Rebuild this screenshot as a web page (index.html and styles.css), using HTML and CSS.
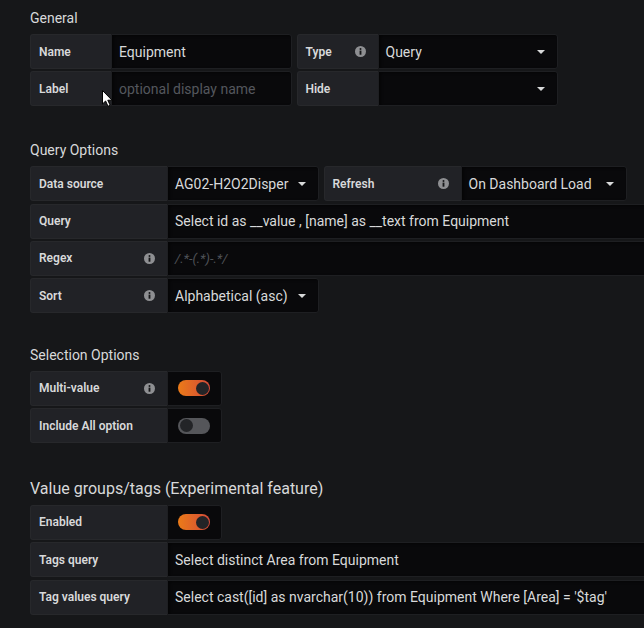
FILE: index.html
```html
<!DOCTYPE html>
<html lang="en">
<head>
<meta charset="utf-8">
<title>Variable editor</title>
<link rel="stylesheet" href="styles.css">
</head>
<body>
<div class="page">
  <section class="section s-general">
    <h5 class="section-heading">General</h5>
    <div class="form-inline">
      <div class="gf-form">
        <span class="gf-label w-name">Name</span>
        <div class="gf-input w-name-input"><span class="val">Equipment</span></div>
      </div>
      <div class="gf-form">
        <span class="gf-label w-name">Type<span class="info"><svg viewBox="0 0 12 12" width="11" height="11"><circle cx="6" cy="6" r="6" fill="#8e8f92"/><rect x="5" y="5" width="2" height="4.5" fill="#161719"/><circle cx="6" cy="3.3" r="1.1" fill="#161719"/></svg></span></span>
        <div class="gf-input gf-select w-type-input"><span class="val">Query</span><span class="caret"></span></div>
      </div>
    </div>
    <div class="form-inline">
      <div class="gf-form">
        <span class="gf-label w-name">Label</span>
        <div class="gf-input w-name-input"><span class="placeholder">optional display name</span></div>
      </div>
      <div class="gf-form">
        <span class="gf-label w-name">Hide</span>
        <div class="gf-input gf-select w-type-input"><span class="val"></span><span class="caret"></span></div>
      </div>
    </div>
  </section>

  <section class="section s-query">
    <h5 class="section-heading">Query Options</h5>
    <div class="form-inline">
      <div class="gf-form">
        <span class="gf-label w-wide">Data source</span>
        <div class="gf-input gf-select w-ds"><span class="val">AG02-H2O2Disper</span><span class="caret"></span></div>
      </div>
      <div class="gf-form">
        <span class="gf-label w-wide">Refresh<span class="info"><svg viewBox="0 0 12 12" width="11" height="11"><circle cx="6" cy="6" r="6" fill="#8e8f92"/><rect x="5" y="5" width="2" height="4.5" fill="#161719"/><circle cx="6" cy="3.3" r="1.1" fill="#161719"/></svg></span></span>
        <div class="gf-input gf-select w-refresh"><span class="val">On Dashboard Load</span><span class="caret"></span></div>
      </div>
    </div>
    <div class="form-inline">
      <div class="gf-form">
        <span class="gf-label w-wide">Query</span>
        <div class="gf-input w-full"><span class="val">Select id as __value , [name] as __text from Equipment</span></div>
      </div>
    </div>
    <div class="form-inline">
      <div class="gf-form">
        <span class="gf-label w-wide">Regex<span class="info"><svg viewBox="0 0 12 12" width="11" height="11"><circle cx="6" cy="6" r="6" fill="#8e8f92"/><rect x="5" y="5" width="2" height="4.5" fill="#161719"/><circle cx="6" cy="3.3" r="1.1" fill="#161719"/></svg></span></span>
        <div class="gf-input w-full"><span class="placeholder regex">/.*-(.*)-.*/</span></div>
      </div>
    </div>
    <div class="form-inline">
      <div class="gf-form">
        <span class="gf-label w-wide">Sort<span class="info"><svg viewBox="0 0 12 12" width="11" height="11"><circle cx="6" cy="6" r="6" fill="#8e8f92"/><rect x="5" y="5" width="2" height="4.5" fill="#161719"/><circle cx="6" cy="3.3" r="1.1" fill="#161719"/></svg></span></span>
        <div class="gf-input gf-select w-ds"><span class="val">Alphabetical (asc)</span><span class="caret"></span></div>
      </div>
    </div>
  </section>

  <section class="section s-selection">
    <h5 class="section-heading">Selection Options</h5>
    <div class="form-inline">
      <div class="gf-form">
        <span class="gf-label w-wide">Multi-value<span class="info"><svg viewBox="0 0 12 12" width="11" height="11"><circle cx="6" cy="6" r="6" fill="#8e8f92"/><rect x="5" y="5" width="2" height="4.5" fill="#161719"/><circle cx="6" cy="3.3" r="1.1" fill="#161719"/></svg></span></span>
        <div class="gf-switch"><span class="track on"><span class="knob"></span></span></div>
      </div>
    </div>
    <div class="form-inline">
      <div class="gf-form">
        <span class="gf-label w-wide">Include All option</span>
        <div class="gf-switch"><span class="track off"><span class="knob"></span></span></div>
      </div>
    </div>
  </section>

  <section class="section s-tags">
    <h5 class="section-heading big">Value groups/tags (Experimental feature)</h5>
    <div class="form-inline">
      <div class="gf-form">
        <span class="gf-label w-wide">Enabled</span>
        <div class="gf-switch"><span class="track on"><span class="knob"></span></span></div>
      </div>
    </div>
    <div class="form-inline">
      <div class="gf-form">
        <span class="gf-label w-wide">Tags query</span>
        <div class="gf-input w-full"><span class="val">Select distinct Area from Equipment</span></div>
      </div>
    </div>
    <div class="form-inline">
      <div class="gf-form">
        <span class="gf-label w-wide">Tag values query</span>
        <div class="gf-input w-full"><span class="val">Select cast([id] as nvarchar(10)) from Equipment Where [Area] = '$tag'</span></div>
      </div>
    </div>
  </section>
</div>
<svg class="cursor" viewBox="0 0 11 17" width="11" height="17"><path d="M0.5 0.5 L0.5 14 L3.6 11 L6 16.3 L8.2 15.3 L5.8 10.2 L10 10.2 Z" fill="#ffffff" stroke="#000000" stroke-width="1" stroke-linejoin="round"/></svg>
</body>
</html>
```

FILE: styles.css
```css
html, body {
  margin: 0;
  padding: 0;
}
body {
  background: #161719;
  color: #d8d9da;
  font-family: Roboto, "Liberation Sans", Arial, sans-serif;
  width: 644px;
  height: 628px;
  overflow: hidden;
  position: relative;
}
.page {
  padding: 10px 0 0 30px;
}
.section-heading {
  margin: 0 0 8px 0;
  font-size: 14px;
  font-weight: 400;
  line-height: 16px;
  color: #d8d9da;
}
.section-heading.big {
  font-size: 16px;
  line-height: 18px;
  margin-bottom: 7px;
}
.s-query { margin-top: 35.8px; }
.s-selection { margin-top: 33.6px; }
.s-tags { margin-top: 36.4px; }

.form-inline {
  display: flex;
  gap: 4.5px;
  margin-bottom: 2.4px;
}
.gf-form {
  display: flex;
  height: 35px;
}
.gf-label {
  box-sizing: border-box;
  display: flex;
  align-items: center;
  justify-content: space-between;
  padding: 0 8px;
  background: #212226;
  border: 1px solid #27282b;
  border-right: none;
  border-radius: 3px 0 0 3px;
  font-size: 12px;
  font-weight: 600;
  color: #d8d9da;
  white-space: nowrap;
  flex-shrink: 0;
}
.info {
  display: flex;
  margin-right: 4px;
}
.gf-input {
  box-sizing: border-box;
  display: flex;
  align-items: center;
  padding: 0 8px 0 7px;
  background: #09090b;
  border: 1px solid #1e1f22;
  border-radius: 0 3px 3px 0;
  box-shadow: inset 2px 1px 3px rgba(0, 0, 0, 0.5);
  font-size: 14px;
  color: #d8d9da;
  white-space: nowrap;
  overflow: hidden;
  flex-shrink: 0;
}
.gf-select {
  justify-content: space-between;
}
.placeholder {
  color: #54575d;
}
.placeholder.regex {
  font-size: 13px;
  font-style: italic;
  color: #4f5257;
}
.caret {
  width: 0;
  height: 0;
  border-left: 4px solid transparent;
  border-right: 4px solid transparent;
  border-top: 4.5px solid #d8d9da;
  margin-right: 4px;
  flex-shrink: 0;
}
.w-name { width: 81px; }
.w-name-input { width: 181px; }
.w-type-input { width: 180px; }
.w-wide { width: 137px; }
.w-ds { width: 152px; }
.w-refresh { width: 166px; }
.w-full { width: 520px; }

.gf-switch {
  box-sizing: border-box;
  width: 55px;
  display: flex;
  align-items: center;
  padding-left: 10px;
  background: #09090b;
  border: 1px solid #1e1f22;
  border-radius: 0 3px 3px 0;
}
.track {
  box-sizing: border-box;
  width: 32px;
  height: 16px;
  border-radius: 8px;
  display: flex;
  align-items: center;
  padding: 0 1.5px;
}
.track.on {
  background: linear-gradient(90deg, #eb7b18, #d44a3a);
  justify-content: flex-end;
}
.track.off {
  background: #55565a;
  justify-content: flex-start;
}
.knob {
  width: 13px;
  height: 13px;
  border-radius: 50%;
  background: #232427;
}
.cursor {
  position: absolute;
  left: 102px;
  top: 90px;
}
```
